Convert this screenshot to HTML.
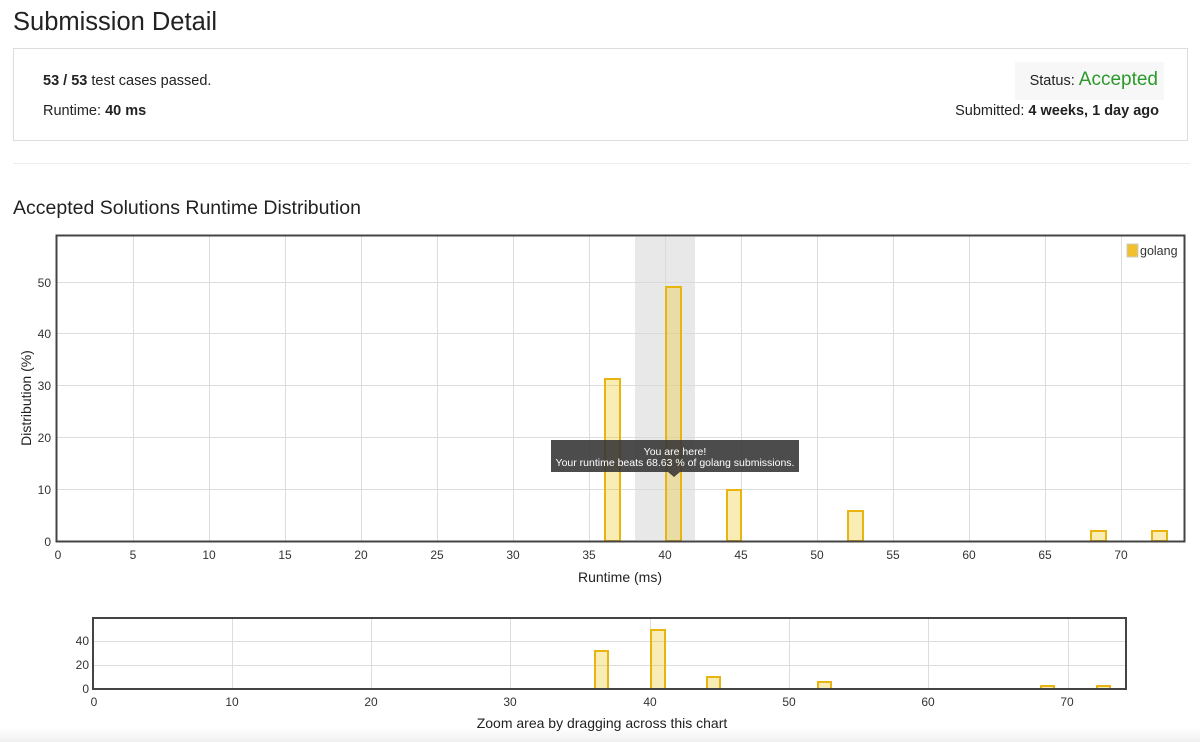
<!DOCTYPE html>
<html><head><meta charset="utf-8"><style>
body{margin:0;width:1200px;height:742px;background:#fff;font-family:"Liberation Sans",Arial,sans-serif;color:#222;position:relative;overflow:hidden}
.a{position:absolute}
</style></head><body>
<div class="a" style="left:13px;top:8px;font-size:25.5px;color:#222">Submission Detail</div>
<div class="a" style="left:13px;top:48px;width:1175px;height:93px;border:1px solid #ddd;box-sizing:border-box"></div>
<div class="a" style="left:43px;top:73px;font-size:14.5px"><b>53 / 53</b> test cases passed.</div>
<div class="a" style="left:43px;top:103px;font-size:14.5px">Runtime: <b>40 ms</b></div>
<div class="a" style="left:1015px;top:62px;width:149px;height:38px;background:#f7f7f7"></div>
<div class="a" style="right:42px;top:70px;font-size:14.5px;line-height:20px;white-space:nowrap">Status: <span style="color:#2a9a2a;font-size:19px">Accepted</span></div>
<div class="a" style="right:41px;top:103px;font-size:14.5px;white-space:nowrap">Submitted: <b>4 weeks, 1 day ago</b></div>
<div class="a" style="left:13px;top:163px;width:1177px;height:1px;background:#eee"></div>
<div class="a" style="left:13px;top:197px;font-size:19.5px">Accepted Solutions Runtime Distribution</div>
<svg class="a" style="left:0;top:0" width="1200" height="742" font-family="Liberation Sans,Arial,sans-serif">
<defs><linearGradient id="g" x1="0" y1="0" x2="0" y2="1"><stop offset="0" stop-color="#fff"/><stop offset="1" stop-color="#f0f0f0"/></linearGradient></defs>
<rect x="0" y="728" width="1200" height="14" fill="url(#g)"/>
<g stroke="#ddd" stroke-width="1">
<line x1="57" y1="489.5" x2="1184" y2="489.5"/><line x1="57" y1="437.5" x2="1184" y2="437.5"/><line x1="57" y1="385.5" x2="1184" y2="385.5"/><line x1="57" y1="333.5" x2="1184" y2="333.5"/><line x1="57" y1="282.5" x2="1184" y2="282.5"/>
<line x1="133.5" y1="236" x2="133.5" y2="541"/><line x1="209.5" y1="236" x2="209.5" y2="541"/><line x1="285.5" y1="236" x2="285.5" y2="541"/><line x1="361.5" y1="236" x2="361.5" y2="541"/><line x1="437.5" y1="236" x2="437.5" y2="541"/><line x1="513.5" y1="236" x2="513.5" y2="541"/><line x1="589.5" y1="236" x2="589.5" y2="541"/><line x1="665.5" y1="236" x2="665.5" y2="541"/><line x1="741.5" y1="236" x2="741.5" y2="541"/><line x1="817.5" y1="236" x2="817.5" y2="541"/><line x1="893.5" y1="236" x2="893.5" y2="541"/><line x1="969.5" y1="236" x2="969.5" y2="541"/><line x1="1045.5" y1="236" x2="1045.5" y2="541"/><line x1="1121.5" y1="236" x2="1121.5" y2="541"/>
</g>
<rect x="635" y="237" width="60" height="303" fill="#d8d8d8" opacity="0.6"/>
<g fill="#f0c419" fill-opacity="0.32" stroke="#e8b510" stroke-width="2">
<rect x="605" y="379" width="15" height="162"/><rect x="666" y="287" width="15" height="254"/><rect x="727" y="490" width="14" height="51"/><rect x="848" y="511" width="15" height="30"/><rect x="1091" y="531" width="15" height="10"/><rect x="1152" y="531" width="15" height="10"/>
</g>
<rect x="56.5" y="235.5" width="1128" height="306" fill="none" stroke="#444" stroke-width="2"/>
<rect x="1127" y="244" width="11" height="13" fill="#f0c030" stroke="#ccc"/>
<text x="1140" y="255" font-size="12.5" fill="#333">golang</text>
<g font-size="12" fill="#333" text-anchor="end">
<text x="51" y="546">0</text><text x="51" y="494">10</text><text x="51" y="442">20</text><text x="51" y="390">30</text><text x="51" y="338">40</text><text x="51" y="287">50</text>
</g>
<g font-size="12" fill="#333" text-anchor="middle">
<text x="58" y="559">0</text><text x="133" y="559">5</text><text x="209" y="559">10</text><text x="285" y="559">15</text><text x="361" y="559">20</text><text x="437" y="559">25</text><text x="513" y="559">30</text><text x="589" y="559">35</text><text x="665" y="559">40</text><text x="741" y="559">45</text><text x="817" y="559">50</text><text x="893" y="559">55</text><text x="969" y="559">60</text><text x="1045" y="559">65</text><text x="1121" y="559">70</text>
</g>
<text x="620" y="582" font-size="14" fill="#222" text-anchor="middle">Runtime (ms)</text>
<text transform="translate(31,398) rotate(-90)" font-size="14" fill="#222" text-anchor="middle">Distribution (%)</text>
<path d="M551 440H799V472H680L674 477L668 472H551Z" fill="#333" fill-opacity="0.88"/>
<text x="675" y="455" font-size="10.5" fill="#fff" text-anchor="middle">You are here!</text>
<text x="675" y="466" font-size="10.5" fill="#fff" text-anchor="middle">Your runtime beats 68.63 % of golang submissions.</text>
<g stroke="#ddd"><line x1="94" y1="641.5" x2="1125" y2="641.5"/><line x1="94" y1="665.5" x2="1125" y2="665.5"/>
<line x1="232.5" y1="618" x2="232.5" y2="688"/><line x1="371.5" y1="618" x2="371.5" y2="688"/><line x1="510.5" y1="618" x2="510.5" y2="688"/><line x1="650.5" y1="618" x2="650.5" y2="688"/><line x1="789.5" y1="618" x2="789.5" y2="688"/><line x1="928.5" y1="618" x2="928.5" y2="688"/><line x1="1068.5" y1="618" x2="1068.5" y2="688"/></g>
<g fill="#f0c419" fill-opacity="0.32" stroke="#e8b510" stroke-width="2">
<rect x="595" y="651" width="13" height="38"/><rect x="651" y="630" width="14" height="59"/><rect x="707" y="677" width="13" height="12"/><rect x="818" y="682" width="13" height="7"/><rect x="1041" y="686" width="13" height="3"/><rect x="1097" y="686" width="13" height="3"/>
</g>
<rect x="93" y="618" width="1033" height="71" fill="none" stroke="#444" stroke-width="2"/>
<g font-size="12" fill="#333" text-anchor="end"><text x="89" y="693">0</text><text x="89" y="669">20</text><text x="89" y="645">40</text></g>
<g font-size="12" fill="#333" text-anchor="middle"><text x="94" y="706">0</text><text x="232" y="706">10</text><text x="371" y="706">20</text><text x="510" y="706">30</text><text x="650" y="706">40</text><text x="789" y="706">50</text><text x="928" y="706">60</text><text x="1067" y="706">70</text></g>
<text x="602" y="728" font-size="14" fill="#222" text-anchor="middle">Zoom area by dragging across this chart</text>
</svg>
</body></html>
